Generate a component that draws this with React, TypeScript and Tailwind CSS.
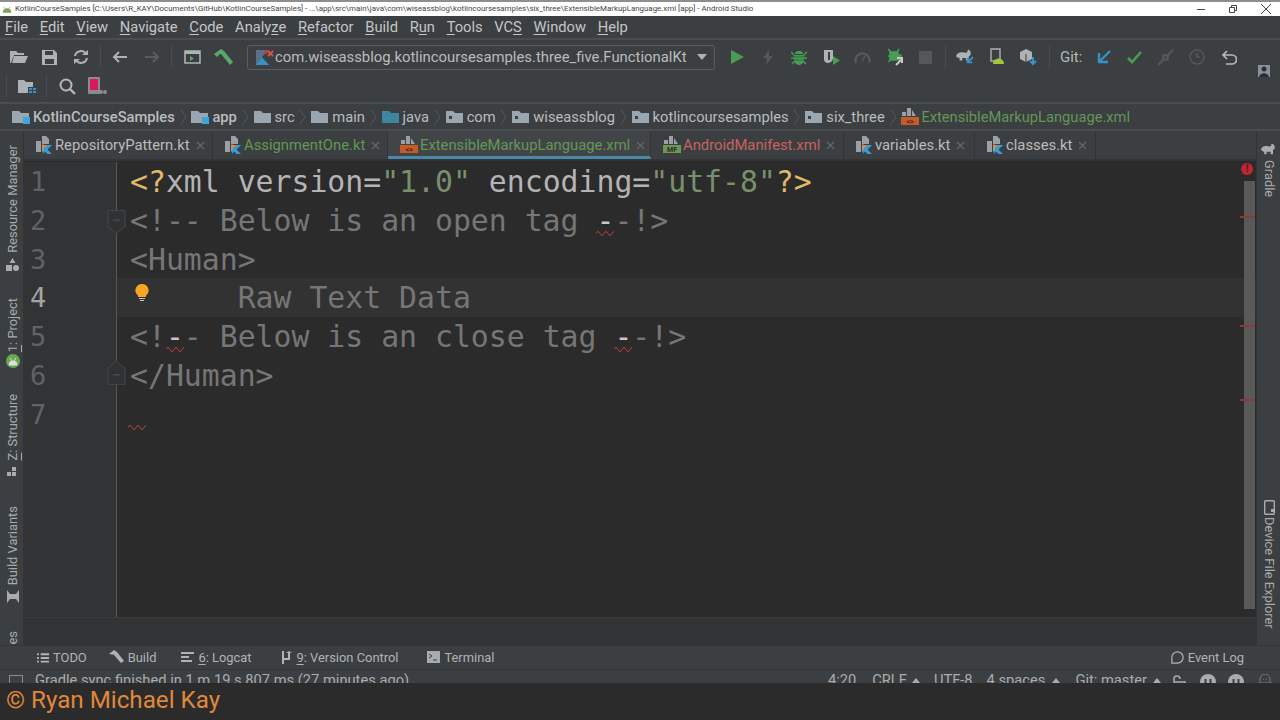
import React from "react";

const Sans = "[font-family:Roboto,'Liberation_Sans',sans-serif]";

function U({ c }: { c: string }) {
  return <span className="underline underline-offset-2">{c}</span>;
}

function Android({ className = "" }: { className?: string }) {
  return (
    <svg viewBox="0 0 16 10" className={className} fill="currentColor">
      <path d="M1 10a7 7 0 0 1 14 0z" />
      <path d="M3 1l2 3M13 1l-2 3" stroke="currentColor" strokeWidth="1" />
    </svg>
  );
}

function FileKt() {
  return (
    <svg width="16" height="18" viewBox="0 0 16 18" className="shrink-0">
      <path d="M0 5h5v11H0zM6 0h4l3 3v5H6z" fill="#9aa0a6" />
      <path d="M6 8.5h2v7H6z" fill="#9aa0a6" />
      <path d="M7 9h4.5L7 14z" fill="#e8873a" />
      <path d="M11.5 9H16l-4.5 4.5L16 18h-4.5L9 15.5 7 18v-4z" fill="#3a9bd9" />
    </svg>
  );
}

function FileXml({ label = "<>", color = "#c75a26" }: { label?: string; color?: string }) {
  return (
    <svg width="18" height="18" viewBox="0 0 18 18" className="mr-[-1px] shrink-0">
      <path d="M6 0h4v8H6zM1 4h4v4H1zM11 2l4 6h-4z" fill="#9aa0a6" />
      <rect x="0" y="9" width="18" height="8" fill={color} />
      <text x="9" y="15.5" fontSize="7" fontWeight="700" textAnchor="middle" fill="#2b2b2b" fontFamily="Roboto">
        {label}
      </text>
    </svg>
  );
}

function Folder({ dot, color = "#9aa7b0", blue }: { dot?: boolean; color?: string; blue?: boolean }) {
  return (
    <svg width="18" height="14" viewBox="0 0 18 14" className="shrink-0">
      <path d="M0 1h7l2 2h8v10H0z" fill={color} />
      {dot && <rect x="3" y="6" width="3" height="3" fill="#3c3f41" />}
      {blue && <rect x="11" y="7" width="7" height="7" fill="#3ea4dc" />}
    </svg>
  );
}

function Chevron() {
  return (
    <svg width="7" height="16" viewBox="0 0 7 16" className="shrink-0">
      <path d="M1 1l5 7-5 7" fill="none" stroke="#55585b" strokeWidth="1" />
    </svg>
  );
}

function Crumb({ icon, text, bold }: { icon: React.ReactNode; text: string; bold?: boolean }) {
  return (
    <div className="flex items-center gap-[3px]">
      {icon}
      <span className={bold ? "font-medium" : ""}>{text}</span>
    </div>
  );
}

function Close() {
  return (
    <svg width="9" height="9" viewBox="0 0 9 9" className="shrink-0">
      <path d="M1 1l7 7M8 1l-7 7" stroke="#66696c" strokeWidth="1.1" />
    </svg>
  );
}

function Tab({
  icon,
  text,
  color,
  width,
  active,
}: {
  icon: React.ReactNode;
  text: string;
  color: string;
  width: string;
  active?: boolean;
}) {
  return (
    <div
      className={`flex h-full shrink-0 items-center gap-[3px] border-r border-[#323436] pl-[12px] ${width} ${
        active ? "border-b-[3px] border-b-[#4a88a8] bg-[#424548] pt-[3px]" : ""
      }`}
    >
      {icon}
      <span className={color}>{text}</span>
      <span className="ml-[3px]">
        <Close />
      </span>
    </div>
  );
}

function CodeLine({
  n,
  children,
  active,
  marker,
}: {
  n: number;
  children?: React.ReactNode;
  active?: boolean;
  marker?: React.ReactNode;
}) {
  return (
    <div className="relative flex h-[38.8px] items-center">
      <div
        className={`h-full w-[93px] shrink-0 border-r border-[#55585a] bg-[#313335] pl-[6px] text-[27px] leading-[40.8px] ${
          active ? "text-[#a4a3a3]" : "text-[#606366]"
        }`}
      >
        {n}
      </div>
      <div className={`h-full flex-1 whitespace-pre pl-[13px] leading-[40.8px] ${active ? "bg-[#323232]" : ""}`}>
        {children}
      </div>
      {marker}
    </div>
  );
}

function Squiggle({ w = 18 }: { w?: number }) {
  return (
    <svg width={w} height="5" viewBox={`0 0 ${w} 5`} className="block">
      <path
        d={`M0 2.5 ${Array.from({ length: Math.ceil(w / 4) }, (_, i) => `q2 ${i % 2 ? 4 : -4} 4 0`).join(" ")}`}
        fill="none"
        stroke="#b3403d"
        strokeWidth="1"
      />
    </svg>
  );
}

function Sq({ children }: { children: React.ReactNode }) {
  return (
    <span className="relative inline-block text-[#c8c8c8]">
      {children}
      <span className="absolute bottom-[6px] left-0">
        <Squiggle />
      </span>
    </span>
  );
}

function V({ children, className = "" }: { children: React.ReactNode; className?: string }) {
  return <div className={`rotate-180 whitespace-nowrap [writing-mode:vertical-rl] ${className}`}>{children}</div>;
}

function VR({ children, className = "" }: { children: React.ReactNode; className?: string }) {
  return <div className={`whitespace-nowrap [writing-mode:vertical-rl] ${className}`}>{children}</div>;
}

function Fold({ up }: { up?: boolean }) {
  return (
    <svg width="19" height="26" viewBox="0 0 20 26" className={`absolute left-[83px] ${up ? "top-[4px]" : "top-[8px]"}`}>
      <path d={up ? "M1 25V8l9-7 9 7v17z" : "M1 1v17l9 7 9-7V1z"} fill="#2f3133" stroke="#47494b" strokeWidth="1" />
      <path d={up ? "M6 15h8" : "M6 11h8"} stroke="#55585a" strokeWidth="1" />
    </svg>
  );
}

function Bulb() {
  return (
    <svg width="14" height="18" viewBox="0 0 14 18" className="absolute left-[111px] top-[6px]">
      <path d="M7 0a6.5 6.5 0 0 1 4 11.7V13H3v-1.3A6.5 6.5 0 0 1 7 0z" fill="#f5a623" />
      <path d="M4 14.5h6M5 16.5h4" stroke="#c4c4c4" strokeWidth="1.2" />
    </svg>
  );
}

function Face({ className = "" }: { className?: string }) {
  return (
    <svg width="16" height="16" viewBox="0 0 16 16" className={`shrink-0 ${className}`}>
      <circle cx="8" cy="8" r="8" fill="#a9acae" />
      <rect x="4.5" y="5" width="2" height="4" fill="#3c3f41" />
      <rect x="9.5" y="5" width="2" height="4" fill="#3c3f41" />
    </svg>
  );
}

function Up({ className = "" }: { className?: string }) {
  return (
    <svg width="8" height="5" viewBox="0 0 8 5" className={`mt-[8px] shrink-0 ${className}`}>
      <path d="M0 5l4-5 4 5z" fill="#a9acae" />
    </svg>
  );
}

function Toolbar() {
  return (
    <div className="flex h-[34px] shrink-0 items-center pl-[10px]">
      <svg width="18" height="14" viewBox="0 0 18 14" className="shrink-0"><path d="M0 1h6l2 2h6v2H4L1 13H0zM4 6h14l-3 7H2z" fill="#aeb2b5" /></svg>
      <svg width="15" height="15" viewBox="0 0 15 15" className="ml-[14px] shrink-0"><path d="M0 0h12l3 3v12H0z" fill="#aeb2b5" /><path d="M3 1h8v4H3zM3 9h9v5H3z" fill="#3c3f41" /></svg>
      <svg width="16" height="16" viewBox="0 0 16 16" className="ml-[16px] shrink-0"><path d="M2 7a6 6 0 0 1 11-2M14 9a6 6 0 0 1-11 2" fill="none" stroke="#aeb2b5" strokeWidth="2" /><path d="M9 6h6V1zM7 10H1v5z" fill="#aeb2b5" /></svg>
      <div className="ml-[11px] h-[22px] w-px shrink-0 bg-[#4a4d50]" />
      <svg width="16" height="12" viewBox="0 0 16 12" className="ml-[11px] shrink-0"><path d="M15 6H2M7 1L2 6l5 5" fill="none" stroke="#aeb2b5" strokeWidth="2" /></svg>
      <svg width="16" height="12" viewBox="0 0 16 12" className="ml-[16px] shrink-0"><path d="M1 6h13M9 1l5 5-5 5" fill="none" stroke="#5a5d60" strokeWidth="2" /></svg>
      <div className="ml-[11px] h-[22px] w-px shrink-0 bg-[#4a4d50]" />
      <svg width="17" height="14" viewBox="0 0 17 14" className="ml-[12px] shrink-0"><path d="M1 1h15v12H1z" fill="none" stroke="#aeb2b5" strokeWidth="1.6" /><path d="M1 1h15v3H1z" fill="#aeb2b5" /><path d="M6 6l4 2.5L6 11z" fill="#59a869" /></svg>
      <svg width="19" height="18" viewBox="0 0 19 18" className="ml-[13px] shrink-0"><path d="M0 6l7-5 3 2-1 3-3 0-3 3z" fill="#59a869" /><path d="M7 6l3-3 9 11-3 3z" fill="#59a869" /></svg>
      <div className="ml-[14px] flex h-[25px] w-[468px] shrink-0 items-center rounded-[3px] border border-[#5a5d60] pl-[8px] pr-[8px] text-[#bbbbbb]">
        <svg width="19" height="15" viewBox="0 0 19 15" className="shrink-0"><path d="M0 15V0h12L6 7l7 8z" fill="#5a6f8a" /><path d="M8 0h5l-3 5z" fill="#c0413b" /><path d="M12 1l5 5M17 1l-5 5" stroke="#e0524c" strokeWidth="1.8" /><path d="M0 15l6-7 7 7z" fill="#3592c4" /></svg>
        <span className="text-[14.85px]">com.wiseassblog.kotlincoursesamples.three_five.FunctionalKt</span>
        <svg width="10" height="6" viewBox="0 0 10 6" className="ml-auto mr-[-1px] shrink-0"><path d="M0 0h10L5 6z" fill="#aeb2b5" /></svg>
      </div>
      <svg width="13" height="14" viewBox="0 0 13 14" className="ml-[16px] shrink-0"><path d="M0 0l13 7-13 7z" fill="#499c54" /></svg>
      <svg width="12" height="15" viewBox="0 0 12 15" className="ml-[18px] shrink-0"><path d="M7 0L1 8h4l-1 7 7-9H7z" fill="#55585b" /></svg>
      <svg width="16" height="16" viewBox="0 0 16 16" className="ml-[17px] shrink-0"><path d="M4 5a4 3 0 0 1 8 0zM3 6h10v5a5 5 0 0 1-10 0z" fill="#499c54" /><path d="M0 3l3 3M16 3l-3 3M0 9h3M16 9h-3M1 15l3-3M15 15l-3-3" stroke="#499c54" strokeWidth="1.5" /><path d="M3 8h10M3 11h10" stroke="#2f6b39" strokeWidth="1" /></svg>
      <svg width="17" height="16" viewBox="0 0 17 16" className="ml-[16px] shrink-0"><path d="M1 1h9v8a5 5 0 0 1-5 5 4 4 0 0 1-4-5z" fill="#aeb2b5" /><path d="M5 3h2v8H5z" fill="#3c3f41" /><path d="M10 7l7 4.5-7 4.5z" fill="#499c54" /></svg>
      <svg width="17" height="11" viewBox="0 0 17 11" className="ml-[14px] shrink-0"><path d="M2 11a7 7 0 1 1 13 0" fill="none" stroke="#55585b" strokeWidth="2.4" /><path d="M8 9l3-5" stroke="#55585b" strokeWidth="1.6" /></svg>
      <svg width="18" height="18" viewBox="0 0 18 18" className="ml-[16px] shrink-0"><path d="M3 4h8v3h3v5H3zM1 1l3 3M1 8h2M1 14l3-2M12 1l-2 3" stroke="#499c54" strokeWidth="1.5" fill="#499c54" /><path d="M9 17l5-5M10 10h5v5" stroke="#c8c8c8" strokeWidth="2" fill="none" /></svg>
      <div className="ml-[14px] h-[13px] w-[13px] shrink-0 bg-[#55585a]" />
      <div className="ml-[13px] h-[22px] w-px shrink-0 bg-[#4a4d50]" />
      <svg width="18" height="18" viewBox="0 0 20 18" className="ml-[10px] shrink-0"><path d="M0 8c1-4 5-5 9-4 3 1 4 0 4-3 3 0 4 3 3 6l-2 2v4h-3v-3H7v3H4v-3C2 10 1 10 0 8z" fill="#aeb2b5" /><path d="M19 9l-6 6M13 10v5h5" stroke="#3592c4" strokeWidth="2" fill="none" /></svg>
      <svg width="15" height="18" viewBox="0 0 15 18" className="ml-[16px] shrink-0"><path d="M1 1h9v12H1z" fill="none" stroke="#aeb2b5" strokeWidth="1.4" /><path d="M3 16a5 5 0 0 1 11 0z" fill="#a4c639" /></svg>
      <svg width="18" height="18" viewBox="0 0 18 18" className="ml-[15px] shrink-0"><path d="M0 4l6-3 6 3v7l-6 3-6-3z" fill="#aeb2b5" /><path d="M6 6v8" stroke="#3c3f41" /><path d="M13 9v7M10 13l3 3 3-3" stroke="#3592c4" strokeWidth="2" fill="none" /></svg>
      <div className="ml-[11px] h-[22px] w-px shrink-0 bg-[#4a4d50]" />
      <span className="ml-[10px] shrink-0 text-[15px] text-[#b5b5b5]">Git:</span>
      <svg width="14" height="14" viewBox="0 0 14 14" className="ml-[15px] shrink-0"><path d="M13 1L2 12M2 3v9h9" fill="none" stroke="#3592c4" strokeWidth="2.4" /></svg>
      <svg width="16" height="13" viewBox="0 0 16 13" className="ml-[16px] shrink-0"><path d="M1 7l4 4 9-10" fill="none" stroke="#499c54" strokeWidth="2.6" /></svg>
      <svg width="17" height="17" viewBox="0 0 16 16" className="ml-[14px] shrink-0"><path d="M1 15l5-5M15 1l-5 5M6 6h4v4H6z" stroke="#55585b" strokeWidth="2" fill="none" /></svg>
      <svg width="16" height="16" viewBox="0 0 16 16" className="ml-[15px] shrink-0"><circle cx="8" cy="8" r="7" fill="none" stroke="#55585b" strokeWidth="1.5" /><path d="M8 4v4h3" fill="none" stroke="#55585b" strokeWidth="1.5" /></svg>
      <svg width="15" height="15" viewBox="0 0 15 15" className="ml-[17px] shrink-0"><path d="M5 1L1 5l4 4M1 5h9a4 4 0 0 1 0 9H4" fill="none" stroke="#b5b8ba" strokeWidth="1.7" /></svg>
      <svg width="12" height="12" viewBox="0 0 12 12" className="ml-[21px] mt-[28px] shrink-0"><rect width="12" height="12" fill="#8a9099" /><circle cx="6" cy="4" r="2.5" fill="#2a3038" /><path d="M1 12c1-5 9-5 10 0z" fill="#2a3038" /></svg>
    </div>
  );
}

export default function App() {
  return (
    <div className={`relative flex h-[720px] w-[1280px] flex-col overflow-hidden bg-[#3c3f41] text-[#b9bcbe] ${Sans}`}>
      {/* Title bar */}
      <div className="flex h-[16px] shrink-0 items-center border-t-2 border-[#8e8e8e] bg-white pl-[2px] text-[7.9px] text-[#444444]">
        <Android className="h-[7px] w-[10px] text-[#7da35a]" />
        <span className="ml-[3px]">
          KotlinCourseSamples [C:\Users\R_KAY\Documents\GitHub\KotlinCourseSamples] - ...\app\src\main\java\com\wiseassblog\kotlincoursesamples\six_three\ExtensibleMarkupLanguage.xml [app] - Android Studio
        </span>
        <div className="ml-auto flex items-center gap-[24px] pr-[9px]">
          <div className="h-px w-[8px] bg-[#444444]" />
          <svg width="8" height="8" viewBox="0 0 8 8"><path d="M0.5 2.5h5v5h-5zM2.5 2.5v-2h5v5h-2" fill="none" stroke="#444444" /></svg>
          <svg width="10" height="10" viewBox="0 0 10 10"><path d="M0 0l10 10M10 0L0 10" stroke="#444444" /></svg>
        </div>
      </div>

      {/* Menu */}
      <div className="flex h-[24px] shrink-0 items-center gap-[11.7px] border-b-2 border-[#4a4d4f] pl-[5px] pt-[1px] text-[14.7px] text-[#c4c6c8]">
        <span><U c="F" />ile</span>
        <span><U c="E" />dit</span>
        <span><U c="V" />iew</span>
        <span><U c="N" />avigate</span>
        <span><U c="C" />ode</span>
        <span>Analy<U c="z" />e</span>
        <span><U c="R" />efactor</span>
        <span><U c="B" />uild</span>
        <span>R<U c="u" />n</span>
        <span><U c="T" />ools</span>
        <span>VC<U c="S" /></span>
        <span><U c="W" />indow</span>
        <span><U c="H" />elp</span>
      </div>

      <Toolbar />

      {/* Second toolbar row */}
      <div className="flex h-[30px] shrink-0 items-center border-b-2 border-[#4a4d4f] pb-[4px] pl-[6px]">
        <div className="h-[22px] w-px bg-[#4a4d50]" />
        <svg width="18" height="15" viewBox="0 0 18 15" className="ml-[11px]"><path d="M0 1h6l2 2h7v5h-5v6H0z" fill="#aeb2b5" /><path d="M11 9h3v2h-3zM15 9h3v2h-3zM11 12h3v2h-3zM15 12h3v2h-3z" fill="#3592c4" /></svg>
        <div className="ml-[10px] h-[22px] w-px bg-[#4a4d50]" />
        <svg width="17" height="17" viewBox="0 0 17 17" className="ml-[12px]"><circle cx="7" cy="7" r="5.5" fill="none" stroke="#b5b8ba" strokeWidth="2" /><path d="M11 11l5 5" stroke="#b5b8ba" strokeWidth="2.4" /></svg>
        <svg width="19" height="18" viewBox="0 0 19 18" className="ml-[12px]"><rect x="0" y="0" width="12" height="17" rx="1" fill="#8a8d90" /><rect x="2" y="2" width="8" height="11" fill="#d8175f" /><circle cx="13" cy="15" r="2" fill="#8a8d90" /><circle cx="17" cy="15" r="2" fill="#8a8d90" /></svg>
      </div>

      {/* Breadcrumbs */}
      <div className="flex h-[27px] shrink-0 items-center gap-[4.85px] border-b-2 border-[#4a4d4f] pl-[12px] pt-[1px] text-[14.7px] text-[#b9bcbe]">
        <Crumb icon={<Folder blue />} text="KotlinCourseSamples" bold />
        <Chevron />
        <Crumb icon={<Folder blue />} text="app" bold />
        <Chevron />
        <Crumb icon={<Folder />} text="src" />
        <Chevron />
        <Crumb icon={<Folder />} text="main" />
        <Chevron />
        <Crumb icon={<Folder color="#3e86a0" />} text="java" />
        <Chevron />
        <Crumb icon={<Folder dot />} text="com" />
        <Chevron />
        <Crumb icon={<Folder dot />} text="wiseassblog" />
        <Chevron />
        <Crumb icon={<Folder dot />} text="kotlincoursesamples" />
        <Chevron />
        <Crumb icon={<Folder dot />} text="six_three" />
        <Chevron />
        <div className="flex items-center gap-[3px] text-[#629755]">
          <FileXml />
          <span>ExtensibleMarkupLanguage.xml</span>
        </div>
      </div>

      {/* Body */}
      <div className="flex min-h-0 flex-1">
        {/* Left strip */}
        <div className="flex w-[24px] shrink-0 flex-col items-center border-r border-[#323436] pl-[2px] pt-[14px] text-[12.9px] text-[#a9acae]">
          <V>Resource Manager</V>
          <svg width="13" height="13" viewBox="0 0 13 13" className="mt-[5px] shrink-0"><path d="M6.5 0l3 5h-6z M0 7h6v6H0z" fill="#a9acae" /><circle cx="10" cy="10" r="3" fill="#a9acae" /></svg>
          <V className="mt-[27px]"><U c="1" />: Project</V>
          <svg width="14" height="14" viewBox="0 0 14 14" className="mt-[2px] shrink-0"><circle cx="7" cy="7" r="7" fill="#6aa84f" /><path d="M3 11a4 4 0 0 1 8 0zM4 4l2 3M10 4L8 7" fill="#dddddd" stroke="#dddddd" /></svg>
          <V className="mt-[26px]"><U c="Z" />: Structure</V>
          <svg width="12" height="11" viewBox="0 0 12 11" className="mt-[4px] shrink-0"><path d="M0 7h4v4H0zM5 7h4v4H5zM5 2h4v4H5z" fill="#a9acae" /></svg>
          <V className="mt-[30px]">Build Variants</V>
          <svg width="12" height="13" viewBox="0 0 12 13" className="mt-[5px] shrink-0"><path d="M0 0l3 4h6l3-4v13L9 9H3l-3 4z" fill="#a9acae" /></svg>
          <V className="mt-[28px]">es</V>
        </div>

        {/* Center */}
        <div className="flex min-w-0 flex-1 flex-col">
          <div className="flex h-[30px] shrink-0 items-center border-b-2 border-[#323436] text-[14.8px]">
            <Tab icon={<FileKt />} text="RepositoryPattern.kt" color="text-[#bbbbbb]" width="w-[189px]" />
            <Tab icon={<FileKt />} text="AssignmentOne.kt" color="text-[#629755]" width="w-[175px]" />
            <Tab icon={<FileXml />} text="ExtensibleMarkupLanguage.xml" color="text-[#629755]" width="w-[263px]" active />
            <Tab icon={<FileXml label="MF" color="#6a9955" />} text="AndroidManifest.xml" color="text-[#c7635f]" width="w-[193px]" />
            <Tab icon={<FileKt />} text="variables.kt" color="text-[#bbbbbb]" width="w-[131px]" />
            <Tab icon={<FileKt />} text="classes.kt" color="text-[#bbbbbb]" width="w-[121px]" />
          </div>

          <div className="relative flex min-h-0 flex-1 flex-col">
            <div className="flex flex-1 flex-col bg-[#2b2b2b] pt-[1px] text-[29.8px] text-[#767676] [font-family:'DejaVu_Sans_Mono',monospace]">
              <CodeLine n={1}>
                <span className="text-[#e2b968]">&lt;?</span>
                <span className="text-[#b4b4b4]">xml version=</span>
                <span className="text-[#78906b]">"1.0"</span>
                <span className="text-[#b4b4b4]"> encoding=</span>
                <span className="text-[#78906b]">"utf-8"</span>
                <span className="text-[#e2b968]">?&gt;</span>
              </CodeLine>
              <CodeLine n={2} marker={<Fold />}>&lt;!-- Below is an open tag <Sq>-</Sq>-!&gt;</CodeLine>
              <CodeLine n={3}>&lt;Human&gt;</CodeLine>
              <CodeLine n={4} active marker={<Bulb />}>      Raw Text Data</CodeLine>
              <CodeLine n={5}>&lt;!<Sq>-</Sq>- Below is an close tag <Sq>-</Sq>-!&gt;</CodeLine>
              <CodeLine n={6} marker={<Fold up />}>&lt;/Human&gt;</CodeLine>
              <CodeLine n={7}><span className="ml-[-2px]"><Sq>{" "}</Sq></span></CodeLine>
              <div className="flex flex-1">
                <div className="w-[93px] shrink-0 border-r border-[#55585a] bg-[#313335]" />
              </div>
            </div>
            <div className="h-[28px] shrink-0 border-t border-[#3a3c3e] bg-[#313335]" />

            {/* Scrollbar overlay */}
            <div className="absolute right-[1px] top-[20px] h-[428px] w-[11px] bg-[#595959]" />
            <div className="absolute right-[1px] top-[55px] h-[2px] w-[15px] bg-[#8c3a36]" />
            <div className="absolute right-[1px] top-[164px] h-[2px] w-[15px] bg-[#8c3a36]" />
            <div className="absolute right-[1px] top-[238px] h-[2px] w-[15px] bg-[#8c3a36]" />
            <div className="absolute right-[3px] top-[2px] flex h-[12px] w-[12px] items-center justify-center rounded-full bg-[#c7222d] text-[10px] font-bold leading-none text-[#2b2b2b]">!</div>
          </div>
        </div>

        {/* Right strip */}
        <div className="flex w-[24px] shrink-0 flex-col items-center border-l border-[#323436] pl-[1px] pt-[12px] text-[12.9px] text-[#a9acae]">
          <svg width="16" height="12" viewBox="0 0 20 15" className="shrink-0"><path d="M0 8c1-4 5-5 9-4 3 1 4 0 4-3 3 0 5 3 4 6l-2 2v5h-3v-3H7v3H4v-3C2 10 1 10 0 8z" fill="#a9acae" /></svg>
          <VR className="mt-[5px]">Gradle</VR>
          <svg width="11" height="15" viewBox="0 0 11 15" className="mt-[303px] shrink-0"><rect x="0.7" y="0.7" width="9.6" height="13.6" rx="1" fill="none" stroke="#a9acae" strokeWidth="1.4" /><rect x="7" y="9" width="3" height="3" fill="#a9acae" /></svg>
          <VR className="mt-[2px]">Device File Explorer</VR>
        </div>
      </div>

      {/* Bottom tool strip */}
      <div className="flex h-[24px] shrink-0 items-center border-t border-[#323436] text-[12.9px] text-[#b0b3b5]">
        <div className="ml-[37px] flex items-center gap-[4px]">
          <svg width="12" height="11" viewBox="0 0 13 11"><path d="M0 1h2v2H0zM0 5h2v2H0zM0 9h2v2H0zM4 1h9v2H4zM4 5h9v2H4zM4 9h9v2H4z" fill="#b0b3b5" /></svg>
          <span>TODO</span>
        </div>
        <div className="ml-[22px] flex items-center gap-[4px]">
          <svg width="15" height="14" viewBox="0 0 15 14"><path d="M0 4l5-4 3 2-2 3zM5 5l3-3 7 9-3 2z" fill="#b0b3b5" /></svg>
          <span>Build</span>
        </div>
        <div className="ml-[25px] flex items-center gap-[4px]">
          <svg width="13" height="10" viewBox="0 0 13 10"><path d="M0 0h13v2H0zM0 4h8v2H0zM0 8h11v2H0z" fill="#b0b3b5" /></svg>
          <span><U c="6" />: Logcat</span>
        </div>
        <div className="ml-[29px] flex items-center gap-[4px]">
          <svg width="12" height="13" viewBox="0 0 12 13"><path d="M1 0h2v13H1zM3 7h4V2H5l3-2 3 2H9v7H3z" fill="#b0b3b5" /></svg>
          <span><U c="9" />: Version Control</span>
        </div>
        <div className="ml-[29px] flex items-center gap-[4px]">
          <svg width="13" height="12" viewBox="0 0 13 12"><rect width="13" height="12" fill="#a9acae" /><path d="M2 3l3 2-3 2M6 9h4" stroke="#3c3f41" fill="none" /></svg>
          <span>Terminal</span>
        </div>
        <div className="ml-auto mr-[36px] flex items-center gap-[3px]">
          <svg width="15" height="15" viewBox="0 0 16 16"><path d="M2 13V8a6 6 0 1 1 6 6H2z" fill="none" stroke="#b0b3b5" strokeWidth="1.3" /></svg>
          <span>Event Log</span>
        </div>
      </div>

      {/* Status bar */}
      <div className="flex h-[51px] shrink-0 items-start border-t border-[#323436] text-[14.7px] leading-[20px] text-[#a9acae]">
        <div className="ml-[9px] mt-[5px] h-[14px] w-[14px] shrink-0 border border-[#8a8d90]" />
        <span className="ml-[12px] whitespace-nowrap">Gradle sync finished in 1 m 19 s 807 ms (27 minutes ago)</span>
        <div className="ml-auto mr-[8px] flex items-start whitespace-nowrap">
          <span>4:20</span>
          <span className="ml-[16px]">CRLF</span>
          <Up className="ml-[5px]" />
          <span className="ml-[14px]">UTF-8</span>
          <span className="ml-[14px]">4 spaces</span>
          <Up className="ml-[7px]" />
          <span className="ml-[15px]">Git: master</span>
          <Up className="ml-[6px]" />
          <svg width="14" height="14" viewBox="0 0 14 14" className="ml-[11px] mt-[5px] shrink-0"><path d="M2 6V4a3 3 0 0 1 6 0M2 7h11v6H2z" fill="none" stroke="#a9acae" strokeWidth="1.6" /></svg>
          <Face className="ml-[14px] mt-[4px]" />
          <Face className="ml-[12px] mt-[4px]" />
          <svg width="14" height="14" viewBox="0 0 14 14" className="ml-[14px] mt-[4px] shrink-0"><path d="M2 9V5a5 5 0 0 1 10 0v4M0 9h14M3 9v4M7 9v4M11 9v4M5 5h1M8 5h1" fill="none" stroke="#77797c" strokeWidth="1" /></svg>
        </div>
      </div>

      {/* Video footer overlay */}
      <div className="absolute bottom-0 left-0 flex h-[37px] w-full items-center bg-[#2b2b2b] pb-[2px] pl-[6px] text-[24.2px] text-[#e0883a]">
        © Ryan Michael Kay
      </div>
    </div>
  );
}
